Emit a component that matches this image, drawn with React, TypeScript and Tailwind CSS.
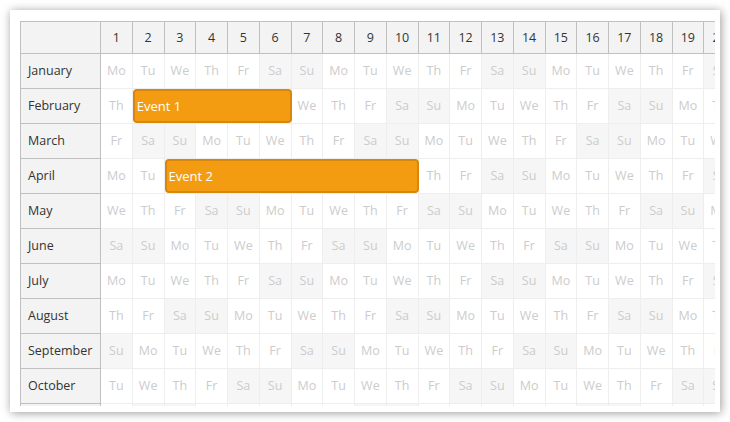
import React from 'react';

const MONTHS = [
  'January', 'February', 'March', 'April', 'May', 'June',
  'July', 'August', 'September', 'October', 'November', 'December',
];
const DAY_NAMES = ['Su', 'Mo', 'Tu', 'We', 'Th', 'Fr', 'Sa'];
const YEAR = 2024;
const CELL = 31.75;
// only the first 20 days fit in the visible viewport
const VISIBLE_DAYS = 20;

interface CalEvent {
  month: number;
  start: number;
  days: number;
  text: string;
}

const EVENTS: CalEvent[] = [
  { month: 1, start: 2, days: 5, text: 'Event 1' },
  { month: 3, start: 3, days: 8, text: 'Event 2' },
];

const days = Array.from({ length: VISIBLE_DAYS }, (_, i) => i + 1);

const MonthRow: React.FC<{ month: number }> = ({ month }) => {
  const inMonth = new Date(YEAR, month + 1, 0).getDate();
  const events = EVENTS.filter((e) => e.month === month);
  const covered = (d: number) =>
    events.some((e) => d >= e.start && d < e.start + e.days);

  return (
    <div className="flex h-[35px]">
      <div className="w-[80px] shrink-0 flex items-center pl-[7px] pt-px bg-[#f3f3f3] border-r border-b border-[#c0c0c0] text-[#333]">
        {MONTHS[month]}
      </div>
      <div className="relative flex">
        {days.map((d) => {
          const valid = d <= inMonth;
          const dow = new Date(YEAR, month, d).getDay();
          const weekend = valid && (dow === 0 || dow === 6);
          return (
            <div
              key={d}
              className={`w-[31.75px] shrink-0 flex items-center justify-center pt-px border-r border-b border-[#eeeeee] text-[#cccccc] ${weekend ? 'bg-[#f6f6f6]' : 'bg-white'}`}
            >
              {valid && !covered(d) ? DAY_NAMES[dow] : ''}
            </div>
          );
        })}
        {events.map((e) => (
          <div
            key={e.text}
            className="absolute top-0 h-[34px] flex items-center pl-[2px] pt-px rounded-[4px] border-2 border-[#d8870c] bg-[#f39c12] text-white text-[13px]"
            style={{ left: (e.start - 1) * CELL, width: e.days * CELL + 0.5 }}
          >
            {e.text}
          </div>
        ))}
      </div>
    </div>
  );
};

export default function App() {
  return (
    <div
      className="w-[730px] h-[422px] bg-white pt-[10px] pl-[10px]"
      style={{ fontFamily: '"Segoe UI", "Open Sans", sans-serif' }}
    >
      <div className="w-[710px] h-[402px] bg-white pl-[10px] pt-[11px] shadow-[1px_1px_9px_rgba(0,0,0,0.4)]">
        <div className="w-[695px] h-[385px] overflow-hidden text-[12.5px]">
          <div className="inline-block border-l border-t border-[#c0c0c0]">
            <div className="flex h-[32px]">
              <div className="w-[80px] shrink-0 bg-[#f3f3f3] border-r border-b border-[#c0c0c0]" />
              {days.map((d) => (
                <div
                  key={d}
                  className="w-[31.75px] shrink-0 flex items-center justify-center pt-px bg-[#f3f3f3] border-r border-b border-[#c0c0c0] text-[#333]"
                >
                  {d}
                </div>
              ))}
            </div>
            {MONTHS.map((_, m) => (
              <MonthRow key={m} month={m} />
            ))}
          </div>
        </div>
      </div>
    </div>
  );
}
